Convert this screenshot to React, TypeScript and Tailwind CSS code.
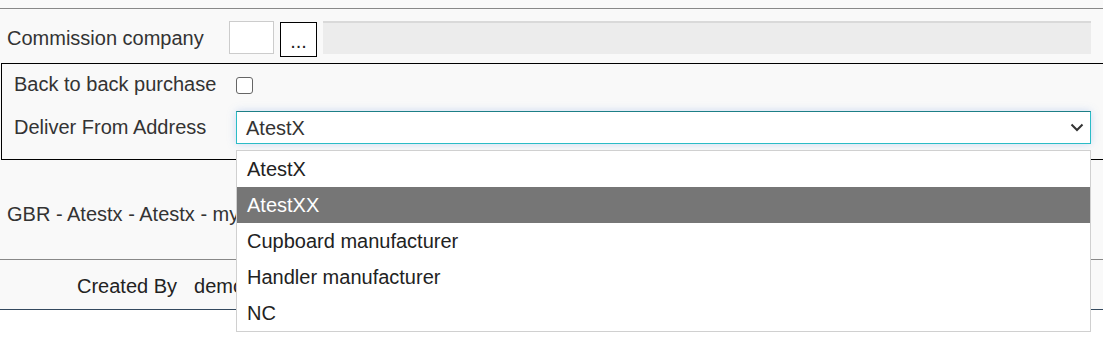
const options = ['AtestX', 'AtestXX', 'Cupboard manufacturer', 'Handler manufacturer', 'NC'];

export default function App() {
  return (
    <div className="relative w-[1103px] h-[363px] overflow-hidden bg-white text-[20px] text-[#333] font-['Liberation_Sans',Arial,sans-serif]">
      <div className="bg-[#f9f9f9] pt-[8px]">
        <div className="border-t border-[#888]">
          {/* commission company */}
          <div className="flex items-start h-[54px] pt-[12px] pl-[7px]">
            <div className="w-[222px] leading-[33px] mt-[1px]">Commission company</div>
            <div className="w-[45px] h-[33px] border border-[#ccc] bg-white" />
            <button className="ml-[6px] mt-[1px] w-[37px] h-[35px] border border-black bg-white text-[20px] leading-none text-[#222] pt-[2px]">
              ...
            </button>
            <div className="ml-[6px] w-[768px] h-[33px] bg-[#ececec] border-t-2 border-[#d9d9d9]" />
          </div>

          {/* bordered box */}
          <div className="ml-[1px] mr-[-4px] border border-black pt-[12px] pb-[15px] pl-[12px]">
            <div className="flex items-center h-[19px]">
              <div className="w-[222px] leading-[19px] mt-[-2px]">Back to back purchase</div>
              <div className="w-[17px] h-[17px] border border-[#666] rounded-[3px] bg-white" />
            </div>
            <div className="flex items-center mt-[16px]">
              <div className="w-[222px] leading-[33px]">Deliver From Address</div>
              <div className="flex items-center justify-between w-[855px] h-[33px] bg-white border border-[#2bbcc6] border-t-[#1d7f86] shadow-[0_0_8px_rgba(120,160,230,0.35)] pl-[9px] pr-[6px]">
                <span>AtestX</span>
                <svg width="14" height="9" viewBox="0 0 14 9">
                  <polyline points="1.5,1.5 7,7 12.5,1.5" fill="none" stroke="#333" strokeWidth="2" />
                </svg>
              </div>
            </div>
          </div>

          {/* address line, clipped where the open list lies over it */}
          <div className="flex items-center h-[99px] pt-[9px] pl-[7px]">
            <div className="w-[229px] overflow-hidden whitespace-nowrap">GBR - Atestx - Atestx - my address line</div>
          </div>

          {/* created by */}
          <div className="flex items-center h-[51px] pt-[3px] pl-[77px] border-t border-b border-t-[#888] border-b-[#34495e] whitespace-nowrap text-[#222]">
            <span>Created By</span>
            <span className="ml-[17px] w-[42px] overflow-hidden">demo user</span>
          </div>
        </div>
      </div>

      {/* open select list */}
      <div className="absolute left-[236px] top-[150px] w-[855px] border border-[#d0d0d0] bg-white text-[#222]">
        {options.map((o) => (
          <div
            key={o}
            className={
              o === 'AtestXX'
                ? 'h-[36px] flex items-center pl-[10px] bg-[#767676] text-white'
                : 'h-[36px] flex items-center pl-[10px]'
            }
          >
            {o}
          </div>
        ))}
      </div>
    </div>
  );
}
